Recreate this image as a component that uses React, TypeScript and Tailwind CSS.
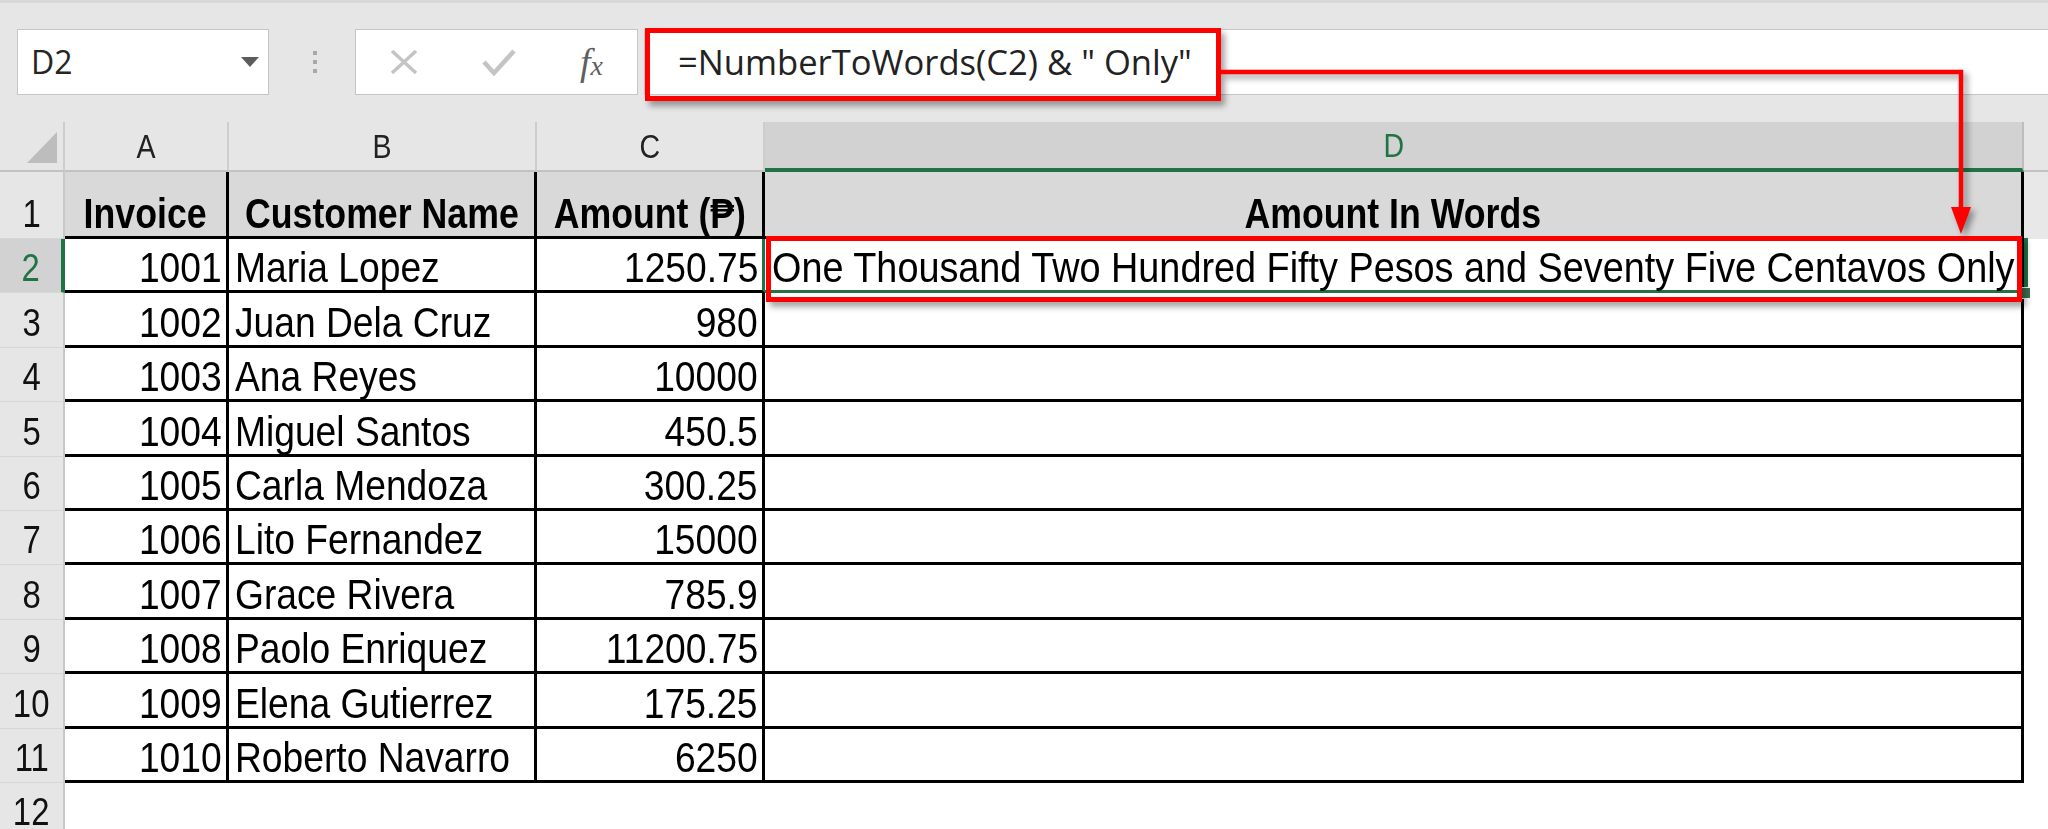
import React from "react";

const rows: [string, string, string][] = [
  ["1001", "Maria Lopez", "1250.75"],
  ["1002", "Juan Dela Cruz", "980"],
  ["1003", "Ana Reyes", "10000"],
  ["1004", "Miguel Santos", "450.5"],
  ["1005", "Carla Mendoza", "300.25"],
  ["1006", "Lito Fernandez", "15000"],
  ["1007", "Grace Rivera", "785.9"],
  ["1008", "Paolo Enriquez", "11200.75"],
  ["1009", "Elena Gutierrez", "175.25"],
  ["1010", "Roberto Navarro", "6250"],
];

function N({ t, o, b }: { t: string; o: "l" | "r" | "c"; b?: boolean }) {
  const origin = o === "l" ? "origin-left" : o === "r" ? "origin-right" : "origin-center";
  const scale = b ? "scale-x-[0.83] font-bold" : "scale-x-[0.865]";
  return (
    <span className={`inline-block shrink-0 whitespace-nowrap font-['Liberation_Sans','Arimo',sans-serif] ${scale} ${origin}`}>
      {t}
    </span>
  );
}

const colHead =
  "bg-[#e6e6e6] border-r-2 border-r-[#cdcdcd] border-b-2 border-b-[#c2c2c2] flex items-center justify-center text-[33px] leading-none text-[#222]";
const rowHead =
  "bg-[#e6e6e6] border-r-2 border-r-[#c8c8c8] border-b border-b-[#d6d6d6] flex items-end justify-center pb-[5px] text-[38px] leading-none text-[#111]";
const cell =
  "border-r-[3px] border-b-[3px] border-black flex items-end pb-[1px] text-[43px] leading-none whitespace-nowrap overflow-visible";

export default function App() {
  return (
    <div className="relative w-[2048px] h-[829px] overflow-hidden bg-white text-black font-['Liberation_Sans','Arimo',sans-serif]">
      {/* Formula bar area */}
      <div className="h-[122px] bg-[#e6e6e6] flex flex-col">
        <div className="h-[3px] bg-[#d8d8d8]" />
        <div className="mt-[26px] h-[66px] flex items-stretch font-['Open_Sans','Noto_Sans',sans-serif]">
          <div className="ml-[17px] w-[252px] bg-white border border-[#c6c6c6] flex items-center justify-between pl-[13px] pr-[9px]">
            <span className="text-[32px] leading-none text-[#262626]">D2</span>
            <svg width="18" height="10" viewBox="0 0 18 10">
              <polygon points="0,0 18,0 9,10" fill="#5c5c5c" />
            </svg>
          </div>
          <div className="ml-[44px] w-[4px] flex flex-col justify-center gap-[5px]">
            <span className="block h-[4px] w-[4px] bg-[#a8a8a8]" />
            <span className="block h-[4px] w-[4px] bg-[#a8a8a8]" />
            <span className="block h-[4px] w-[4px] bg-[#a8a8a8]" />
          </div>
          <div className="ml-[38px] w-[283px] bg-white border border-[#c6c6c6] flex items-center">
            <svg className="ml-[34px]" width="28" height="26" viewBox="0 0 28 26">
              <path d="M2 2 L26 24 M26 2 L2 24" stroke="#c4c4c4" strokeWidth="3.5" fill="none" />
            </svg>
            <svg className="ml-[64px]" width="34" height="27" viewBox="0 0 34 27">
              <polyline points="2,13 12,24 32,2" stroke="#c4c4c4" strokeWidth="4.5" fill="none" />
            </svg>
            <span className="ml-[64px] font-['Liberation_Serif',serif] italic text-[#5f5f5f] leading-none">
              <span className="text-[38px]">f</span>
              <span className="text-[28px]">x</span>
            </span>
          </div>
          <div className="ml-[6px] flex-1 bg-white border-y border-l border-[#c6c6c6] flex items-center pl-[33px]">
            <span className="text-[34.6px] leading-none text-[#222] whitespace-nowrap">=NumberToWords(C2) &amp; " Only"</span>
          </div>
        </div>
      </div>

      {/* Grid */}
      <div className="grid grid-cols-[65px_164px_308px_228px_1259px_24px] grid-rows-[50px_67px_repeat(11,54.4px)]">
        {/* column headers */}
        <div className="bg-[#e6e6e6] border-r-2 border-r-[#cdcdcd] border-b-2 border-b-[#c2c2c2] flex items-end justify-end pr-[6px] pb-[7px]">
          <svg width="30" height="31" viewBox="0 0 30 31">
            <polygon points="0,31 30,0 30,31" fill="#bdbdbd" />
          </svg>
        </div>
        <div className={colHead}><N t="A" o="c" /></div>
        <div className={colHead}><N t="B" o="c" /></div>
        <div className={colHead}><N t="C" o="c" /></div>
        <div className="bg-[#d2d2d2] border-r-2 border-r-[#bdbdbd] border-b-4 border-b-[#217346] flex items-center justify-center text-[33px] leading-none text-[#217346]">
          <N t="D" o="c" />
        </div>
        <div className="bg-[#e6e6e6] border-b-2 border-b-[#c2c2c2]" />

        {/* row 1 */}
        <div className={rowHead}><N t="1" o="c" /></div>
        <div className={`${cell} bg-[#d9d9d9] justify-center`}><N t="Invoice" o="c" b /></div>
        <div className={`${cell} bg-[#d9d9d9] justify-center`}><N t="Customer Name" o="c" b /></div>
        <div className={`${cell} bg-[#d9d9d9] justify-center`}><N t="Amount (₱)" o="c" b /></div>
        <div className={`${cell} bg-[#d9d9d9] justify-center`}><N t="Amount In Words" o="c" b /></div>
        <div className="bg-[#e8e8e8]" />

        {rows.map((r, i) => {
          const sel = i === 0;
          return (
            <React.Fragment key={r[0]}>
              {sel ? (
                <div className="bg-[#d2d2d2] border-r-4 border-r-[#217346] border-b border-b-[#d6d6d6] flex items-end justify-center pb-[5px] text-[38px] leading-none text-[#217346]">
                  <N t="2" o="c" />
                </div>
              ) : (
                <div className={rowHead}><N t={String(i + 2)} o="c" /></div>
              )}
              <div className={`${cell} justify-end pr-[4px]`}><N t={r[0]} o="r" /></div>
              <div className={`${cell} justify-start pl-[6px]`}><N t={r[1]} o="l" /></div>
              <div className={`${cell} justify-end pr-[4px] ${sel ? "border-r-[#217346]" : ""}`}><N t={r[2]} o="r" /></div>
              {sel ? (
                <div className="border-r-[3px] border-r-black border-b-[3px] border-b-[#217346] flex items-end pb-[1px] pl-[7px] overflow-visible">
                  <span className="inline-block origin-left scale-x-[0.9] whitespace-nowrap font-['Liberation_Sans','Arimo',sans-serif] text-[42px] leading-none text-black">
                    One Thousand Two Hundred Fifty Pesos and Seventy Five Centavos Only
                  </span>
                </div>
              ) : (
                <div className="border-r-[3px] border-b-[3px] border-black" />
              )}
              <div className="bg-white" />
            </React.Fragment>
          );
        })}

        {/* row 12 */}
        <div className={rowHead}><N t="12" o="c" /></div>
        <div />
        <div />
        <div />
        <div />
        <div />
      </div>

      {/* selection extras */}
      <div className="absolute left-[2024px] top-[238px] w-[4px] h-[49px] bg-[#217346]" />
      <div className="absolute left-[2021px] top-[287px] w-[10px] h-[12px] bg-[#3f6f50] border border-white" />

      {/* annotations */}
      <div className="absolute left-[645px] top-[28px] w-[576px] h-[73px] border-[5px] border-[#ff0000] shadow-[4px_5px_6px_rgba(0,0,0,0.35)]" />
      <div className="absolute left-[766px] top-[236px] w-[1256px] h-[66px] border-[5px] border-[#ff0000] shadow-[4px_5px_6px_rgba(0,0,0,0.35)]" />
      <svg
        className="absolute left-0 top-0 pointer-events-none drop-shadow-[4px_4px_3px_rgba(0,0,0,0.4)]"
        width="2048"
        height="829"
        viewBox="0 0 2048 829"
      >
        <polyline points="1221,72 1961,72 1961,212" stroke="#ff0000" strokeWidth="4.5" fill="none" />
        <polygon points="1951,207 1971,207 1961,234" fill="#ff0000" />
      </svg>
    </div>
  );
}
